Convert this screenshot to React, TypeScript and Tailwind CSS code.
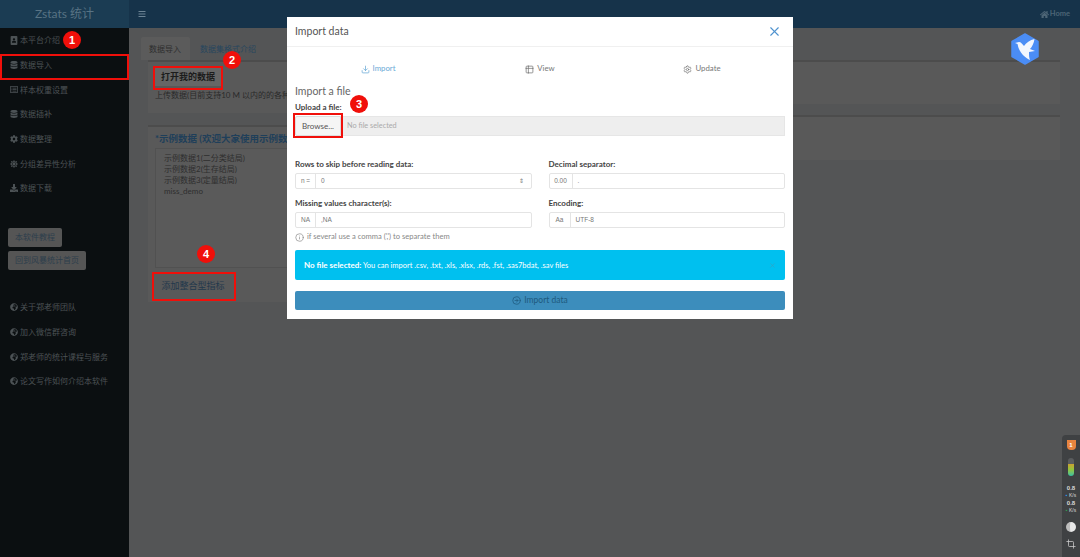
import { CircleArrowRight, Crop, Download, Info, Settings, Table2, X } from 'lucide-react'
import { FaBars, FaCog, FaDatabase, FaDownload, FaGlobeAfrica, FaHome, FaPortrait, FaRegListAlt, FaSun } from 'react-icons/fa'
import type { ReactNode } from 'react'

const topMenu = [
  { label: '本平台介绍', icon: <FaPortrait size={9} /> },
  { label: '数据导入', icon: <FaDatabase size={8} /> },
  { label: '样本权重设置', icon: <FaRegListAlt size={9} /> },
  { label: '数据插补', icon: <FaDatabase size={8} /> },
  { label: '数据整理', icon: <FaCog size={8} /> },
  { label: '分组差异性分析', icon: <FaSun size={8} /> },
  { label: '数据下载', icon: <FaDownload size={8} /> },
]

const bottomMenu = ['关于郑老师团队', '加入微信群咨询', '郑老师的统计课程与服务', '论文写作如何介绍本软件']

function Badge({ n, className }: { n: number; className: string }) {
  return (
    <div className={`absolute w-[18px] h-[18px] rounded-full bg-[#f00f0a] text-white text-[11px] font-bold flex items-center justify-center font-['Liberation_Sans',sans-serif] ${className}`}>
      {n}
    </div>
  )
}

function Field({ label, prefix, value, extra, prefixW }: { label: string; prefix: string; value: string; extra?: ReactNode; prefixW: string }) {
  return (
    <div className="flex-1">
      <div className="text-[8px] font-bold text-[#444] leading-[11px] mb-[3px]">{label}</div>
      <div className="h-[16px] border border-[#e4e4e4] rounded-[2px] flex items-center text-[6.5px] text-[#777] font-['Liberation_Sans',sans-serif]">
        <div className={`h-full border-r border-[#e4e4e4] flex items-center justify-center ${prefixW}`}>{prefix}</div>
        <div className="flex-1 px-[5px]">{value}</div>
        {extra}
      </div>
    </div>
  )
}

function Modal() {
  return (
    <div className="absolute left-[287px] top-[17px] w-[506px] h-[302px] bg-white flex flex-col text-[#555]">
      <div className="h-[30px] border-b border-[#f0f0f0] flex items-center justify-between pl-2 pr-[11px] shrink-0">
        <span className="text-[10.5px] text-[#555]">Import data</span>
        <X size={15} strokeWidth={1.8} className="text-[#4f93cf]" />
      </div>
      <div className="grid grid-cols-3 px-[10px] h-[14px] mt-[15px] text-[7.8px] text-[#777] shrink-0">
        <div className="flex items-center justify-center gap-[3px] text-[#6aa9d6]">
          <Download size={9} strokeWidth={2} />
          Import
        </div>
        <div className="flex items-center justify-center gap-[3px]">
          <Table2 size={9} strokeWidth={2} />
          View
        </div>
        <div className="flex items-center justify-center gap-[3px]">
          <Settings size={9} strokeWidth={2} />
          Update
        </div>
      </div>
      <div className="px-2 flex flex-col">
        <div className="text-[10.5px] leading-[14px] mt-[8px] text-[#666]">Import a file</div>
        <div className="text-[8px] font-bold leading-[11px] mt-[4px] text-[#444]">Upload a file:</div>
        <div className="flex h-[20px] mt-[3px] text-[8px]">
          <div className="w-[46px] border border-[#ddd] rounded-l-[2px] flex items-center justify-center text-[#555] bg-[#f5f5f5]">Browse...</div>
          <div className="flex-1 bg-[#eeeeee] border border-[#e6e6e6] flex items-center pl-[5px] text-[7.3px] text-[#aaa]">No file selected</div>
        </div>
        <div className="flex gap-[17px] mt-[23px]">
          <Field
            label="Rows to skip before reading data:"
            prefix="n ="
            prefixW="w-[20px]"
            value="0"
            extra={<span className="pr-[7px] text-[6px] leading-none text-[#777]">⇕</span>}
          />
          <Field label="Decimal separator:" prefix="0.00" prefixW="w-[23px]" value="." />
        </div>
        <div className="flex gap-[17px] mt-[9px]">
          <Field label="Missing values character(s):" prefix="NA" prefixW="w-[20px]" value=",NA" />
          <Field label="Encoding:" prefix="Aa" prefixW="w-[21px]" value="UTF-8" />
        </div>
        <div className="flex items-center gap-[3px] text-[7.6px] text-[#888] mt-[3px] h-[12px]">
          <Info size={9} strokeWidth={1.8} />
          if several use a comma (',') to separate them
        </div>
        <div className="h-[30px] mt-[7px] rounded-[2px] bg-[#00c0ef] text-white text-[7.5px] flex items-center justify-between pl-[9px] pr-[9px]">
          <span>
            <b className="text-[8px]">No file selected:</b> You can import .csv, .txt, .xls, .xlsx, .rds, .fst, .sas7bdat, .sav files
          </span>
          <X size={7} strokeWidth={2} className="text-[#3d9db8]" />
        </div>
        <div className="h-[19px] mt-[11px] rounded-[2px] bg-[#3c8dbc] text-[#1f5a7e] text-[8.5px] flex items-center justify-center gap-[3px]">
          <CircleArrowRight size={9} strokeWidth={2} />
          Import data
        </div>
      </div>
    </div>
  )
}

export default function App() {
  return (
    <div className="relative w-[1080px] h-[557px] overflow-hidden bg-[#545556] flex flex-col font-['Lato','Noto_Sans_CJK_SC',sans-serif]">
      <header className="h-[28px] flex shrink-0">
        <div className="w-[129px] bg-[#1b3c53] flex items-center justify-center text-[12px] text-[#587384]">Zstats 统计</div>
        <div className="flex-1 bg-[#16334a] flex items-center justify-between pl-[9px] pr-[10px] text-[#6d8494]">
          <FaBars size={8} />
          <div className="flex items-center gap-[1px] text-[7.5px] font-bold text-[#4d6576]">
            <FaHome size={9} />
            Home
          </div>
        </div>
      </header>

      <div className="flex flex-1">
        <aside className="w-[129px] bg-[#0b0f11] text-[#4c5255] text-[8px]">
          {topMenu.map(m => (
            <div key={m.label} className="h-[24.7px] flex items-center gap-[2px] pl-[10px]">
              <span className="w-[8px] flex justify-center">{m.icon}</span>
              <span>{m.label}</span>
            </div>
          ))}
          <div className="flex flex-col items-start gap-[4px] pl-[8px] mt-[27px]">
            <div className="h-[19px] px-[7px] rounded-[2px] bg-[#555555] text-[#2d3e4c] flex items-center">本软件教程</div>
            <div className="h-[19px] px-[7px] rounded-[2px] bg-[#555555] text-[#2d3e4c] flex items-center">回到风暴统计首页</div>
          </div>
          <div className="mt-[25px]">
            {bottomMenu.map(t => (
              <div key={t} className="h-[24.7px] flex items-center gap-[2px] pl-[10px]">
                <FaGlobeAfrica size={8} />
                <span>{t}</span>
              </div>
            ))}
          </div>
        </aside>

        <main className="flex-1 pl-[12px] pr-[20px] pt-[9px] text-[#2a2a2a]">
          <div className="flex h-[23px] text-[8px]">
            <div className="px-[8px] w-[49px] bg-[#5b5b5b] rounded-t-[2px] flex items-center text-[#2e2e2e]">数据导入</div>
            <div className="pl-[10px] flex items-center text-[#27465e]">数据集格式介绍</div>
          </div>
          <div className="ml-[7px] grid grid-cols-2 gap-[10px] items-start">
            <div className="flex flex-col gap-[12px]">
              <div className="h-[53px] bg-[#595959] border-t-2 border-[#4c4c4c] pl-[7px] pt-[5px]">
                <div className="h-[19px] w-[66px] bg-[#666666] flex items-center justify-center text-[9px] font-bold text-[#1c1c1c]">打开我的数据</div>
                <div className="text-[8px] mt-[4px] leading-[11px] whitespace-nowrap">上传数据(目前支持10 M 以内的的各种</div>
              </div>
              <div className="h-[177px] bg-[#595959] border-t-2 border-[#4c4c4c] pl-[7px] pt-[5px] flex flex-col">
                <div className="text-[9.5px] font-bold text-[#1f3f5a] leading-[14px] whitespace-nowrap">*示例数据 (欢迎大家使用示例数据</div>
                <div className="mt-[2px] h-[120px] border border-[#515151] bg-[#5a5a5a] pl-[8px] pt-[4px] text-[8px] leading-[11px] text-[#2e2e2e]">
                  <div>示例数据1(二分类结局)</div>
                  <div>示例数据2(生存结局)</div>
                  <div>示例数据3(定量结局)</div>
                  <div>miss_demo</div>
                </div>
                <div className="mt-[6px] h-[24px] w-[76px] flex items-center justify-center text-[9px] text-[#22384c]">添加整合型指标</div>
              </div>
            </div>
            <div className="flex flex-col gap-[11px]">
              <div className="h-[44px] bg-[#595959] border-t-2 border-[#4c4c4c]" />
              <div className="h-[45px] bg-[#595959] border-t-2 border-[#4c4c4c]" />
            </div>
          </div>
        </main>
      </div>

      <Modal />

      {/* annotations */}
      <div className="absolute left-0 top-[54px] w-[129px] h-[26px] border-2 border-[#f00f0a]" />
      <div className="absolute left-[153px] top-[66px] w-[70px] h-[24px] border-2 border-[#f00f0a]" />
      <div className="absolute left-[293px] top-[113px] w-[50px] h-[25px] border-2 border-[#f00f0a]" />
      <div className="absolute left-[152px] top-[272px] w-[84px] h-[29px] border-2 border-[#f00f0a]" />
      <Badge n={1} className="left-[63px] top-[31px]" />
      <Badge n={2} className="left-[223px] top-[51px]" />
      <Badge n={3} className="left-[350px] top-[95px]" />
      <Badge n={4} className="left-[197px] top-[245px]" />

      {/* floating logo */}
      <svg className="absolute left-[1010px] top-[33px] w-[30px] h-[32px]" viewBox="0 0 30 32">
        <path d="M15 1 L28 8.5 V23.5 L15 31 L2 23.5 V8.5 Z" fill="#4b8df5" stroke="#4b8df5" strokeLinejoin="round" strokeWidth="1.5" />
        <path d="M5 10 L9 9 C11 9 12 11 14 13 C16 10 20 7 24.5 6 C24 10 22 14 20 16 L25 18 L19 19 C19 22 19 25 20 27 C16 25 11 21 9 16 C8 14 8 12 7.5 11 Z" fill="#f2f6fe" />
      </svg>

      {/* system monitor */}
      <div className="absolute right-0 top-[435px] w-[18px] h-[122px] bg-[#3f4143] rounded-tl-[4px] flex flex-col items-center pt-[5px] text-[#d8d8d8] font-['Liberation_Sans',sans-serif]">
        <div className="w-[9px] h-[10px] bg-[#e8843f] rounded-b-[4px] text-[6px] text-white font-bold flex items-center justify-center">1</div>
        <div className="w-[6px] h-[18px] mt-[8px] rounded-[3px] bg-gradient-to-b from-[#c8a030] via-[#8cc63f] to-[#2fbf9f] border-t-[6px] border-[#5a5c5e]" />
        <div className="text-[6px] font-bold leading-[7px] mt-[9px]">0.8</div>
        <div className="text-[5px] leading-[7px] whitespace-nowrap"><span className="text-[#2a9df4]">▪</span> K/s</div>
        <div className="text-[6px] font-bold leading-[7px] mt-[1px]">0.8</div>
        <div className="text-[5px] leading-[7px] whitespace-nowrap"><span className="text-[#2fa34f]">▪</span> K/s</div>
        <div className="w-[10px] h-[10px] rounded-full bg-[#e8e8e8] mt-[8px] border-l-[4px] border-[#bdbdbd]" />
        <Crop size={10} strokeWidth={1.8} className="mt-[7px] text-[#cfcfcf]" />
      </div>
    </div>
  )
}
